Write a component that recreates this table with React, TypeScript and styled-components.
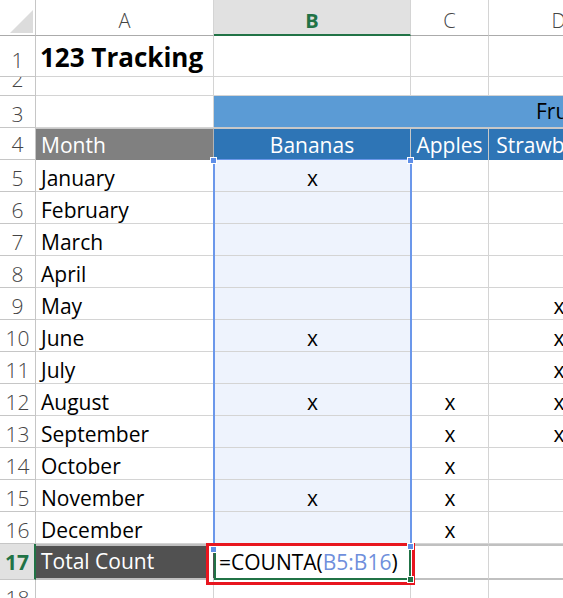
import React from 'react';
import styled, { createGlobalStyle } from 'styled-components';

const GlobalStyle = createGlobalStyle`
  html, body { margin: 0; padding: 0; background: #fff; }
  body { width: 563px; height: 598px; overflow: hidden; }
`;

const W = { a: 178, b: 197, c: 78, d: 140 };
const GREEN = '#217346';
const GRID = '#d4d4d4';
const HEAD_LINE = '#c6c6c6';

const Sheet = styled.div`
  position: relative;
  width: 563px;
  height: 598px;
  overflow: hidden;
  background: #fff;
  font-family: "Open Sans", "Noto Sans", sans-serif;
  color: #000;
`;

const Grid = styled.div`
  display: flex;
  flex-direction: column;
  width: 629px;
`;

const Row = styled.div<{ $h: number }>`
  display: flex;
  flex: none;
  height: ${p => p.$h}px;
`;

const Corner = styled.div`
  position: relative;
  width: 36px;
  flex: none;
  box-sizing: border-box;
  border-right: 1px solid ${HEAD_LINE};
  border-bottom: 1px solid #ababab;
  &::after {
    content: '';
    position: absolute;
    right: 2px;
    bottom: 2px;
    width: 23px;
    height: 23px;
    background: #dcdcdc;
    clip-path: polygon(100% 0, 100% 100%, 0 100%);
  }
`;

const ColHead = styled.div<{ $w: number; $active?: boolean }>`
  width: ${p => p.$w}px;
  flex: none;
  box-sizing: border-box;
  display: flex;
  align-items: flex-end;
  justify-content: center;
  padding-bottom: ${p => (p.$active ? 3 : 4)}px;
  font-size: 20px;
  line-height: 20px;
  font-weight: ${p => (p.$active ? 700 : 300)};
  color: ${p => (p.$active ? GREEN : '#444')};
  background: ${p => (p.$active ? '#e1e1e1' : '#fff')};
  border-right: 1px solid ${GRID};
  border-bottom: ${p => (p.$active ? `2px solid ${GREEN}` : '1px solid #ababab')};
`;

const RowNum = styled.div<{ $active?: boolean; $pb?: number; $top?: boolean }>`
  width: 36px;
  flex: none;
  box-sizing: border-box;
  display: flex;
  justify-content: center;
  align-items: ${p => (p.$top ? 'flex-start' : 'flex-end')};
  padding-bottom: ${p => p.$pb ?? 3}px;
  overflow: hidden;
  font-size: 21px;
  line-height: 20px;
  font-weight: ${p => (p.$active ? 700 : 300)};
  color: ${p => (p.$active ? GREEN : '#444')};
  background: ${p => (p.$active ? '#e1e1e1' : '#fff')};
  border-right: ${p => (p.$active ? `2px solid ${GREEN}` : `1px solid ${HEAD_LINE}`)};
  border-bottom: 1px solid ${HEAD_LINE};
`;

const NumText = styled.span<{ $lift?: number }>`
  display: block;
  margin-top: ${p => -(p.$lift ?? 0)}px;
`;

const Cell = styled.div<{
  $w: number;
  $center?: boolean;
  $sel?: boolean;
  $pb?: number;
  $heavyTop?: boolean;
  $heavyBottom?: boolean;
}>`
  width: ${p => p.$w}px;
  flex: none;
  box-sizing: border-box;
  display: flex;
  align-items: flex-end;
  justify-content: ${p => (p.$center ? 'center' : 'flex-start')};
  padding: 0 4px ${p => p.$pb ?? 3}px 5px;
  font-size: 21px;
  line-height: 20px;
  white-space: nowrap;
  overflow: hidden;
  background: ${p => (p.$sel ? '#eef3fd' : '#fff')};
  border-right: 1px solid ${GRID};
  border-top: ${p => (p.$heavyTop ? '2px solid #c0c0c0' : 'none')};
  border-bottom: ${p => (p.$heavyBottom ? '2px solid #c0c0c0' : `1px solid ${GRID}`)};
`;

const Title = styled(Cell)`
  font-size: 26px;
  line-height: 26px;
  font-weight: 700;
  padding-left: 4px;
`;

const Band = styled.div<{ $w: number }>`
  width: ${p => p.$w}px;
  flex: none;
  box-sizing: border-box;
  display: flex;
  align-items: flex-end;
  padding: 0 0 6px 322px;
  font-size: 21px;
  line-height: 20px;
  white-space: nowrap;
  background: #5b9bd5;
  color: #000;
  border-bottom: 1px solid #c8c8c8;
`;

const HeadCell = styled.div<{ $w: number; $tone: 'gray' | 'blue' }>`
  width: ${p => p.$w}px;
  flex: none;
  box-sizing: border-box;
  display: flex;
  align-items: flex-end;
  justify-content: ${p => (p.$tone === 'gray' ? 'flex-start' : 'center')};
  padding: 0 2px 5px ${p => (p.$tone === 'gray' ? 5 : 2)}px;
  font-size: 21px;
  line-height: 20px;
  white-space: nowrap;
  overflow: hidden;
  color: #fff;
  background: ${p => (p.$tone === 'gray' ? '#808080' : '#2e75b6')};
  border-right: 1px solid ${p => (p.$tone === 'gray' ? '#b4b4b4' : '#c8c8c8')};
  border-top: 1px solid #c8c8c8;
`;

const TotalLabel = styled(Cell)`
  background: #515151;
  color: #fff;
  border-right: none;
`;

const FormulaCell = styled(Cell)`
  background: #fff;
  padding-left: 3px;
  border-left: 2px solid ${GREEN};
  border-right: 2px solid ${GREEN};
  border-bottom: 2px solid ${GREEN};
`;

const Ref = styled.span`
  color: #6f8fdc;
`;

const SelectionFrame = styled.div`
  position: absolute;
  left: 213px;
  top: 159px;
  width: 199px;
  height: 387px;
  box-sizing: border-box;
  border: 2px solid #6b97ea;
  border-top-width: 1px;
  pointer-events: none;
`;

const Handle = styled.div<{ $x: number; $y: number; $green?: boolean }>`
  position: absolute;
  left: ${p => p.$x}px;
  top: ${p => p.$y}px;
  width: 7px;
  height: 7px;
  box-sizing: border-box;
  background: ${p => (p.$green ? GREEN : '#5f8fe8')};
  border: 1px solid #fff;
`;

const RedBox = styled.div`
  position: absolute;
  left: 206px;
  top: 543px;
  width: 209px;
  height: 42px;
  box-sizing: border-box;
  border: 3px solid #e8161f;
  box-shadow: inset 4px 0 0 #fff;
  pointer-events: none;
`;

type Month = { n: number; m: string; b?: boolean; c?: boolean; d?: boolean };

const months: Month[] = [
  { n: 5, m: 'January', b: true },
  { n: 6, m: 'February' },
  { n: 7, m: 'March' },
  { n: 8, m: 'April' },
  { n: 9, m: 'May', d: true },
  { n: 10, m: 'June', b: true, d: true },
  { n: 11, m: 'July', d: true },
  { n: 12, m: 'August', b: true, c: true, d: true },
  { n: 13, m: 'September', c: true, d: true },
  { n: 14, m: 'October', c: true },
  { n: 15, m: 'November', b: true, c: true },
  { n: 16, m: 'December', c: true },
];

export default function App() {
  return (
    <>
      <GlobalStyle />
      <Sheet>
        <Grid>
          <Row $h={36}>
            <Corner />
            <ColHead $w={W.a}>A</ColHead>
            <ColHead $w={W.b} $active>B</ColHead>
            <ColHead $w={W.c}>C</ColHead>
            <ColHead $w={W.d}>D</ColHead>
          </Row>

          <Row $h={41}>
            <RowNum $pb={6}>1</RowNum>
            <Title $w={W.a} $pb={6}>123 Tracking</Title>
            <Cell $w={W.b} />
            <Cell $w={W.c} />
            <Cell $w={W.d} />
          </Row>

          <Row $h={19}>
            <RowNum $top $pb={0}>
              <NumText $lift={8}>2</NumText>
            </RowNum>
            <Cell $w={W.a} />
            <Cell $w={W.b} />
            <Cell $w={W.c} />
            <Cell $w={W.d} />
          </Row>

          <Row $h={32}>
            <RowNum>3</RowNum>
            <Cell $w={W.a} />
            <Band $w={W.b + W.c + W.d}>Fruits</Band>
          </Row>

          <Row $h={32}>
            <RowNum $pb={5}>4</RowNum>
            <HeadCell $w={W.a} $tone="gray">Month</HeadCell>
            <HeadCell $w={W.b} $tone="blue">Bananas</HeadCell>
            <HeadCell $w={W.c} $tone="blue">Apples</HeadCell>
            <HeadCell $w={W.d} $tone="blue">Strawberries</HeadCell>
          </Row>

          {months.map(r => (
            <Row $h={32} key={r.n}>
              <RowNum>{r.n}</RowNum>
              <Cell $w={W.a}>{r.m}</Cell>
              <Cell $w={W.b} $center $sel>{r.b ? 'x' : ''}</Cell>
              <Cell $w={W.c} $center>{r.c ? 'x' : ''}</Cell>
              <Cell $w={W.d} $center>{r.d ? 'x' : ''}</Cell>
            </Row>
          ))}

          <Row $h={36}>
            <RowNum $active $pb={7}>17</RowNum>
            <TotalLabel $w={W.a} $pb={7} $heavyTop $heavyBottom>Total Count</TotalLabel>
            <FormulaCell $w={W.b} $pb={6} $heavyTop>
              =COUNTA(<Ref>B5:B16</Ref>)
            </FormulaCell>
            <Cell $w={W.c} $heavyTop $heavyBottom />
            <Cell $w={W.d} $heavyTop $heavyBottom />
          </Row>

          <Row $h={32}>
            <RowNum>18</RowNum>
            <Cell $w={W.a} />
            <Cell $w={W.b} />
            <Cell $w={W.c} />
            <Cell $w={W.d} />
          </Row>
        </Grid>

        <SelectionFrame />
        <RedBox />
        <Handle $x={210} $y={157} />
        <Handle $x={407} $y={157} />
        <Handle $x={210} $y={546} />
        <Handle $x={407} $y={543} />
        <Handle $x={407} $y={576} $green />
      </Sheet>
    </>
  );
}
